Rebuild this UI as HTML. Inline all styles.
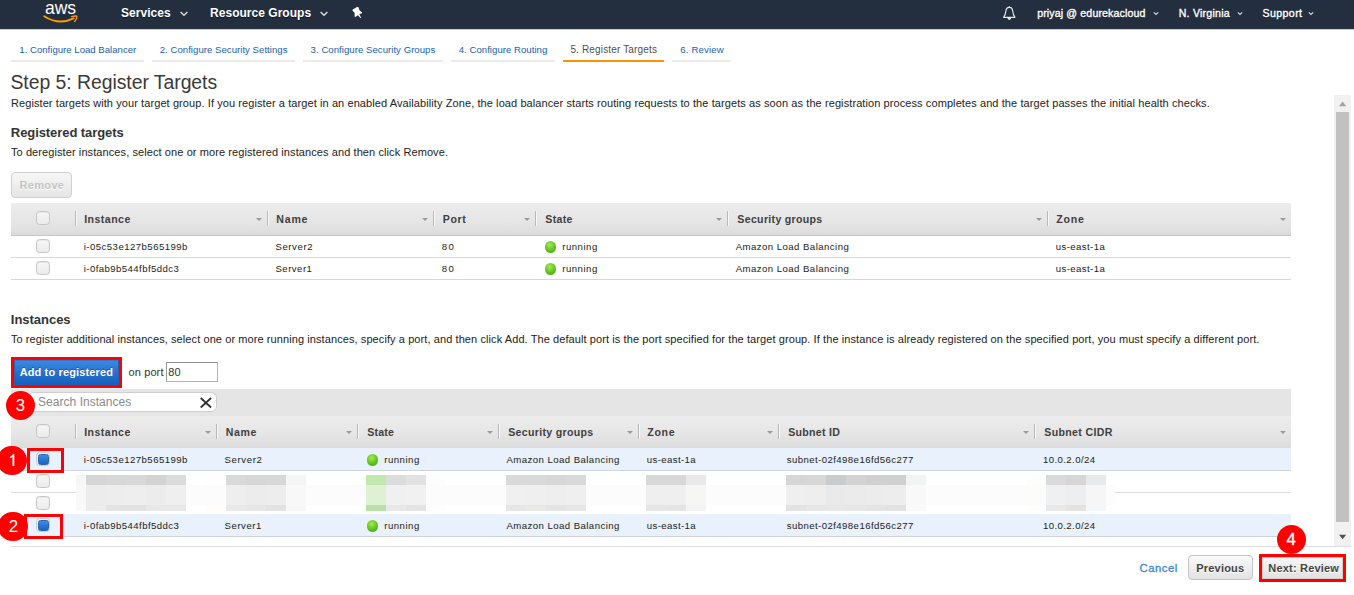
<!DOCTYPE html>
<html><head><meta charset="utf-8"><title>Register Targets</title>
<style>
*{box-sizing:border-box;margin:0;padding:0}
html,body{width:1354px;height:595px;overflow:hidden;background:#fff;font-family:"Liberation Sans",sans-serif}
.a{position:absolute}
.x{position:absolute;white-space:pre;font-family:"Liberation Sans",sans-serif}
.cb{border:1px solid #c6c6c6;border-radius:3.5px;background:linear-gradient(#f6f6f6,#ebebeb);box-shadow:inset 0 1px 1px rgba(0,0,0,.06)}
.cbo{border:1px solid #c9ccd2;border-radius:3.5px;background:#eef2f8}
.cbi{border-radius:2.5px;background:linear-gradient(#3d8ae4,#1f63bb);border:1px solid #2367bd}
.dot{border-radius:50%;background:radial-gradient(circle at 42% 32%,#a6ea52 0%,#6cc928 45%,#4fae1a 80%,#3f9a12 100%)}
.arr{width:0;height:0;border-left:3.1px solid transparent;border-right:3.1px solid transparent;border-top:3.2px solid #9a9a9a}
</style></head><body>
<div class="a" style="left:0;top:0;width:1354px;height:28px;background:#232f3e"></div>
<div class="a" style="left:0;top:28px;width:1354px;height:1px;background:#2b3644"></div>
<div class="a" style="left:0;top:29px;width:1354px;height:1px;background:#c5c8cc"></div>
<svg class="a" style="left:40px;top:0" width="44" height="28" viewBox="40 0 44 28">
<text x="44.9" y="13.7" font-family="Liberation Sans" font-size="18.2" fill="#fff" textLength="31.2" lengthAdjust="spacingAndGlyphs">aws</text>
<path d="M44.2 16.2 Q59 25.6 73.6 18.4" stroke="#f90" stroke-width="1.9" fill="none" stroke-linecap="round"/>
<path d="M71.6 16.6 Q75 15.6 76.9 16.2 Q77 18.6 74.6 21.6" stroke="#f90" stroke-width="1.4" fill="none" stroke-linecap="round" stroke-linejoin="round"/>
</svg>
<svg class="a" style="left:178.6px;top:9px" width="10" height="10" viewBox="0 0 10 10"><path d="M1.6 2.9 L5 6.3 L8.4 2.9" stroke="#ddd" stroke-width="1.4" fill="none"/></svg>
<svg class="a" style="left:318.9px;top:9px" width="10" height="10" viewBox="0 0 10 10"><path d="M1.6 2.9 L5 6.3 L8.4 2.9" stroke="#ddd" stroke-width="1.4" fill="none"/></svg>
<svg class="a" style="left:350px;top:5px" width="16" height="16" viewBox="350 5 16 16"><path d="M357 7 L358.3 7.1 L359.6 10.6 L362.3 12.5 L361.6 13.6 L359.3 14 L361.2 17.9 L360.4 18 L358 15.2 L355.3 17 L354.6 16.6 L354.7 13 L352.4 10.6 L352.8 9.6 Z" fill="#fff"/></svg>
<svg class="a" style="left:1000px;top:4px" width="20" height="18" viewBox="1000 4 20 18"><path d="M1009.3 7.3 C1006.6 7.3 1006 9.4 1005.85 11.2 C1005.65 13.6 1005.3 15.1 1003.6 17.3 L1015 17.3 C1013.3 15.1 1012.95 13.6 1012.75 11.2 C1012.6 9.4 1012 7.3 1009.3 7.3 Z" stroke="#e8e8e8" stroke-width="1.15" fill="none" stroke-linejoin="round"/><path d="M1007.4 17.8 L1011.2 17.8 C1010.9 19.4 1009.9 19.9 1009.3 19.9 C1008.7 19.9 1007.7 19.4 1007.4 17.8 Z" fill="#e8e8e8"/><circle cx="1009.25" cy="7" r=".7" fill="#e8e8e8"/></svg>
<svg class="a" style="left:1151.5px;top:10px" width="8" height="8" viewBox="0 0 8 8"><path d="M1.8 2.3 L4 4.5 L6.2 2.3" stroke="#d8d8d8" stroke-width="1.15" fill="none"/></svg>
<svg class="a" style="left:1235.5px;top:10px" width="8" height="8" viewBox="0 0 8 8"><path d="M1.8 2.3 L4 4.5 L6.2 2.3" stroke="#d8d8d8" stroke-width="1.15" fill="none"/></svg>
<svg class="a" style="left:1307px;top:10px" width="8" height="8" viewBox="0 0 8 8"><path d="M1.8 2.3 L4 4.5 L6.2 2.3" stroke="#d8d8d8" stroke-width="1.15" fill="none"/></svg>
<div class="a " style="left:11px;top:60px;width:133px;height:2px;background:#eaeaea"></div>
<div class="a " style="left:152px;top:60px;width:143px;height:2px;background:#eaeaea"></div>
<div class="a " style="left:303px;top:60px;width:140px;height:2px;background:#eaeaea"></div>
<div class="a " style="left:451px;top:60px;width:104px;height:2px;background:#eaeaea"></div>
<div class="a " style="left:563px;top:60px;width:101px;height:2px;background:#ff9200"></div>
<div class="a " style="left:672px;top:60px;width:59px;height:2px;background:#eaeaea"></div>
<div class="a " style="left:1334px;top:95px;width:17px;height:451px;background:#f1f1f1"></div>
<div class="a " style="left:1336px;top:112px;width:13px;height:410px;background:#c1c1c1"></div>
<svg class="a" style="left:1338px;top:100px" width="10" height="8" viewBox="0 0 10 8"><path d="M1 6.2 L4.6 1.6 L8.2 6.2 Z" fill="#a3a3a3"/></svg>
<svg class="a" style="left:1338px;top:533px" width="10" height="8" viewBox="0 0 10 8"><path d="M1 1.8 L8.2 1.8 L4.6 6.2 Z" fill="#505050"/></svg>
<div class="a " style="left:11px;top:546px;width:1340px;height:1px;background:#dedede"></div>
<div class="a " style="left:11px;top:172px;width:61px;height:26px;border:1px solid #d0d0d0;border-radius:4px;background:linear-gradient(#f6f6f6,#e6e6e6)"></div>
<div class="a " style="left:11px;top:203px;width:1280px;height:33px;background:linear-gradient(#ececec 0%,#e6e6e6 55%,#dcdcdc 100%);border-bottom:1px solid #c6c6c6"></div>
<div class="a cb" style="left:36.2px;top:211px;width:13.6px;height:13.8px;"></div>
<div class="a " style="left:75px;top:211px;width:1px;height:15px;background:#b9b9b9"></div>
<div class="a " style="left:76px;top:211px;width:1px;height:15px;background:#f8f8f8"></div>
<div class="a " style="left:267px;top:211px;width:1px;height:15px;background:#b9b9b9"></div>
<div class="a " style="left:268px;top:211px;width:1px;height:15px;background:#f8f8f8"></div>
<div class="a " style="left:433px;top:211px;width:1px;height:15px;background:#b9b9b9"></div>
<div class="a " style="left:434px;top:211px;width:1px;height:15px;background:#f8f8f8"></div>
<div class="a " style="left:535px;top:211px;width:1px;height:15px;background:#b9b9b9"></div>
<div class="a " style="left:536px;top:211px;width:1px;height:15px;background:#f8f8f8"></div>
<div class="a " style="left:727px;top:211px;width:1px;height:15px;background:#b9b9b9"></div>
<div class="a " style="left:728px;top:211px;width:1px;height:15px;background:#f8f8f8"></div>
<div class="a " style="left:1047px;top:211px;width:1px;height:15px;background:#b9b9b9"></div>
<div class="a " style="left:1048px;top:211px;width:1px;height:15px;background:#f8f8f8"></div>
<div class="a arr" style="left:256.3px;top:217.6px"></div>
<div class="a arr" style="left:422.3px;top:217.6px"></div>
<div class="a arr" style="left:524.3px;top:217.6px"></div>
<div class="a arr" style="left:716.3px;top:217.6px"></div>
<div class="a arr" style="left:1036.3px;top:217.6px"></div>
<div class="a arr" style="left:1280.3px;top:217.6px"></div>
<div class="a " style="left:11px;top:257px;width:1280px;height:1px;background:#d7d7d7"></div>
<div class="a " style="left:11px;top:279px;width:1280px;height:1px;background:#d7d7d7"></div>
<div class="a cb" style="left:36.2px;top:239.3px;width:13.6px;height:13.6px;"></div>
<div class="a cb" style="left:36.2px;top:261.3px;width:13.6px;height:13.6px;"></div>
<div class="a dot" style="left:544.7px;top:241.39999999999998px;width:11.6px;height:11.6px;"></div>
<div class="a dot" style="left:544.7px;top:263.4px;width:11.6px;height:11.6px;"></div>
<div class="a " style="left:11px;top:357px;width:111px;height:31px;background:#ff0000"></div>
<div class="a " style="left:14px;top:360px;width:105px;height:25px;background:linear-gradient(#3a88df,#2470cc 55%,#1561bd);border:1px solid #1c62b8;border-top-color:#2d78d0;border-radius:1px"></div>
<div class="a " style="left:166px;top:362px;width:52px;height:20px;background:#fff;border:1px solid #b4b4b4;border-top-color:#8e8e8e;border-left-color:#9a9a9a"></div>
<div class="a " style="left:11px;top:389px;width:1280px;height:27px;background:#e5e5e5"></div>
<div class="a " style="left:28px;top:392px;width:189px;height:20px;background:#fff;border:1px solid #cfcfcf;border-radius:6px"></div>
<svg class="a" style="left:198px;top:396px" width="16" height="14" viewBox="198 396 16 14"><path d="M200.7 398 L211.1 407.5 M211.1 398 L200.7 407.5" stroke="#333" stroke-width="1.75" fill="none"/></svg>
<div class="a " style="left:11px;top:416px;width:1280px;height:33px;background:linear-gradient(#ececec 0%,#e6e6e6 55%,#dcdcdc 100%);border-bottom:1px solid #c6c6c6"></div>
<div class="a cb" style="left:36.2px;top:424px;width:13.6px;height:13.8px;"></div>
<div class="a " style="left:75px;top:424px;width:1px;height:15px;background:#b9b9b9"></div>
<div class="a " style="left:76px;top:424px;width:1px;height:15px;background:#f8f8f8"></div>
<div class="a " style="left:216px;top:424px;width:1px;height:15px;background:#b9b9b9"></div>
<div class="a " style="left:217px;top:424px;width:1px;height:15px;background:#f8f8f8"></div>
<div class="a " style="left:357px;top:424px;width:1px;height:15px;background:#b9b9b9"></div>
<div class="a " style="left:358px;top:424px;width:1px;height:15px;background:#f8f8f8"></div>
<div class="a " style="left:498px;top:424px;width:1px;height:15px;background:#b9b9b9"></div>
<div class="a " style="left:499px;top:424px;width:1px;height:15px;background:#f8f8f8"></div>
<div class="a " style="left:638px;top:424px;width:1px;height:15px;background:#b9b9b9"></div>
<div class="a " style="left:639px;top:424px;width:1px;height:15px;background:#f8f8f8"></div>
<div class="a " style="left:778px;top:424px;width:1px;height:15px;background:#b9b9b9"></div>
<div class="a " style="left:779px;top:424px;width:1px;height:15px;background:#f8f8f8"></div>
<div class="a " style="left:1034px;top:424px;width:1px;height:15px;background:#b9b9b9"></div>
<div class="a " style="left:1035px;top:424px;width:1px;height:15px;background:#f8f8f8"></div>
<div class="a arr" style="left:205.3px;top:430.6px"></div>
<div class="a arr" style="left:346.3px;top:430.6px"></div>
<div class="a arr" style="left:487.3px;top:430.6px"></div>
<div class="a arr" style="left:627.3px;top:430.6px"></div>
<div class="a arr" style="left:767.3px;top:430.6px"></div>
<div class="a arr" style="left:1023.3px;top:430.6px"></div>
<div class="a arr" style="left:1280.3px;top:430.6px"></div>
<div class="a " style="left:11px;top:448px;width:1280px;height:22px;background:#e8f1fc"></div>
<div class="a " style="left:11px;top:470px;width:1280px;height:1px;background:#cfd6df"></div>
<div class="a " style="left:11px;top:492px;width:1280px;height:1px;background:#dcdcdc"></div>
<div class="a " style="left:11px;top:514px;width:1280px;height:22px;background:#e8f1fc"></div>
<div class="a " style="left:11px;top:536px;width:1280px;height:1px;background:#cfd3d8"></div>
<div class="a cb" style="left:36.2px;top:474.2px;width:13.6px;height:13.6px;"></div>
<div class="a cb" style="left:36.2px;top:496.3px;width:13.6px;height:13.6px;"></div>
<div class="a dot" style="left:366.7px;top:454.4px;width:11.6px;height:11.6px;"></div>
<div class="a dot" style="left:366.7px;top:520.4000000000001px;width:11.6px;height:11.6px;"></div>
<div class="a " style="left:76px;top:475px;width:1039px;height:36px;background:#fff"></div>
<div class="a " style="left:76px;top:485px;width:1039px;height:20px;background:#fcfcfc"></div>
<div class="a " style="left:86px;top:475px;width:20px;height:10px;background:#d6d5d5"></div>
<div class="a " style="left:86px;top:485px;width:20px;height:20px;background:#ececec"></div>
<div class="a " style="left:86px;top:505px;width:20px;height:6px;background:#ececec"></div>
<div class="a " style="left:106px;top:475px;width:20px;height:10px;background:#d7d7d7"></div>
<div class="a " style="left:106px;top:485px;width:20px;height:20px;background:#ededed"></div>
<div class="a " style="left:106px;top:505px;width:20px;height:6px;background:#e3e3e3"></div>
<div class="a " style="left:126px;top:475px;width:20px;height:10px;background:#d8d8d8"></div>
<div class="a " style="left:126px;top:485px;width:20px;height:20px;background:#eeeeee"></div>
<div class="a " style="left:126px;top:505px;width:20px;height:6px;background:#e2e3e2"></div>
<div class="a " style="left:146px;top:475px;width:20px;height:10px;background:#d4d3d3"></div>
<div class="a " style="left:146px;top:485px;width:20px;height:20px;background:#ececec"></div>
<div class="a " style="left:146px;top:505px;width:20px;height:6px;background:#e8e8e8"></div>
<div class="a " style="left:166px;top:475px;width:20px;height:10px;background:#dbdbdb"></div>
<div class="a " style="left:166px;top:485px;width:20px;height:20px;background:#eeefee"></div>
<div class="a " style="left:166px;top:505px;width:20px;height:6px;background:#e8e8e8"></div>
<div class="a " style="left:76px;top:475px;width:10px;height:10px;background:#f5f6f6"></div>
<div class="a " style="left:76px;top:485px;width:10px;height:20px;background:#f8f8f8"></div>
<div class="a " style="left:76px;top:505px;width:10px;height:6px;background:#f9f9f9"></div>
<div class="a " style="left:206px;top:475px;width:20px;height:10px;background:#fefefe"></div>
<div class="a " style="left:206px;top:485px;width:20px;height:20px;background:#fcfcfc"></div>
<div class="a " style="left:206px;top:505px;width:20px;height:6px;background:#fefdfc"></div>
<div class="a " style="left:226px;top:475px;width:20px;height:10px;background:#d9d9d9"></div>
<div class="a " style="left:226px;top:485px;width:20px;height:20px;background:#eeeeee"></div>
<div class="a " style="left:226px;top:505px;width:20px;height:6px;background:#e9e9e9"></div>
<div class="a " style="left:246px;top:475px;width:20px;height:10px;background:#d6d6d6"></div>
<div class="a " style="left:246px;top:485px;width:20px;height:20px;background:#ececec"></div>
<div class="a " style="left:246px;top:505px;width:20px;height:6px;background:#e6e6e6"></div>
<div class="a " style="left:266px;top:475px;width:20px;height:10px;background:#d7d7d7"></div>
<div class="a " style="left:266px;top:485px;width:20px;height:20px;background:#ededed"></div>
<div class="a " style="left:266px;top:505px;width:20px;height:6px;background:#e2e2e2"></div>
<div class="a " style="left:286px;top:475px;width:20px;height:10px;background:#f5f5f5"></div>
<div class="a " style="left:286px;top:485px;width:20px;height:20px;background:#f8f8f8"></div>
<div class="a " style="left:286px;top:505px;width:20px;height:6px;background:#f7f7f7"></div>
<div class="a " style="left:366px;top:475px;width:20px;height:10px;background:#c3e8ac"></div>
<div class="a " style="left:366px;top:485px;width:20px;height:20px;background:#def1d2"></div>
<div class="a " style="left:366px;top:505px;width:20px;height:6px;background:#b9e0a8"></div>
<div class="a " style="left:386px;top:475px;width:20px;height:10px;background:#dcdcdc"></div>
<div class="a " style="left:386px;top:485px;width:20px;height:20px;background:#f0f0f0"></div>
<div class="a " style="left:386px;top:505px;width:20px;height:6px;background:#e8e8e8"></div>
<div class="a " style="left:406px;top:475px;width:20px;height:10px;background:#e2e2e2"></div>
<div class="a " style="left:406px;top:485px;width:20px;height:20px;background:#f1f1f1"></div>
<div class="a " style="left:406px;top:505px;width:20px;height:6px;background:#e4e4e4"></div>
<div class="a " style="left:426px;top:475px;width:20px;height:10px;background:#fdfdfd"></div>
<div class="a " style="left:426px;top:485px;width:20px;height:20px;background:#fcfcfc"></div>
<div class="a " style="left:426px;top:505px;width:20px;height:6px;background:#fdfdfd"></div>
<div class="a " style="left:506px;top:475px;width:20px;height:10px;background:#d9d9d9"></div>
<div class="a " style="left:506px;top:485px;width:20px;height:20px;background:#f0f0f0"></div>
<div class="a " style="left:506px;top:505px;width:20px;height:6px;background:#e6e6e6"></div>
<div class="a " style="left:526px;top:475px;width:20px;height:10px;background:#d9d9d9"></div>
<div class="a " style="left:526px;top:485px;width:20px;height:20px;background:#efefef"></div>
<div class="a " style="left:526px;top:505px;width:20px;height:6px;background:#e8e8e6"></div>
<div class="a " style="left:546px;top:475px;width:20px;height:10px;background:#d7d7d7"></div>
<div class="a " style="left:546px;top:485px;width:20px;height:20px;background:#eeeeee"></div>
<div class="a " style="left:546px;top:505px;width:20px;height:6px;background:#e3e4e3"></div>
<div class="a " style="left:566px;top:475px;width:20px;height:10px;background:#d9d9d9"></div>
<div class="a " style="left:566px;top:485px;width:20px;height:20px;background:#efefef"></div>
<div class="a " style="left:566px;top:505px;width:20px;height:6px;background:#e7e7e7"></div>
<div class="a " style="left:646px;top:475px;width:20px;height:10px;background:#d8d8d8"></div>
<div class="a " style="left:646px;top:485px;width:20px;height:20px;background:#efefef"></div>
<div class="a " style="left:646px;top:505px;width:20px;height:6px;background:#e6e6e6"></div>
<div class="a " style="left:666px;top:475px;width:20px;height:10px;background:#d8d8d8"></div>
<div class="a " style="left:666px;top:485px;width:20px;height:20px;background:#efefef"></div>
<div class="a " style="left:666px;top:505px;width:20px;height:6px;background:#e5e5e5"></div>
<div class="a " style="left:686px;top:475px;width:20px;height:10px;background:#e9e9e9"></div>
<div class="a " style="left:686px;top:485px;width:20px;height:20px;background:#f6f6f5"></div>
<div class="a " style="left:686px;top:505px;width:20px;height:6px;background:#f3f3f3"></div>
<div class="a " style="left:786px;top:475px;width:20px;height:10px;background:#d6d6d6"></div>
<div class="a " style="left:786px;top:485px;width:20px;height:20px;background:#efefef"></div>
<div class="a " style="left:786px;top:505px;width:20px;height:6px;background:#e3e3e3"></div>
<div class="a " style="left:806px;top:475px;width:20px;height:10px;background:#d8d7d5"></div>
<div class="a " style="left:806px;top:485px;width:20px;height:20px;background:#eeeeee"></div>
<div class="a " style="left:806px;top:505px;width:20px;height:6px;background:#e7e7e7"></div>
<div class="a " style="left:826px;top:475px;width:20px;height:10px;background:#c9cbcd"></div>
<div class="a " style="left:826px;top:485px;width:20px;height:20px;background:#eaeaea"></div>
<div class="a " style="left:826px;top:505px;width:20px;height:6px;background:#e8e8e8"></div>
<div class="a " style="left:846px;top:475px;width:20px;height:10px;background:#d3d3d3"></div>
<div class="a " style="left:846px;top:485px;width:20px;height:20px;background:#ebebeb"></div>
<div class="a " style="left:846px;top:505px;width:20px;height:6px;background:#e7e7e7"></div>
<div class="a " style="left:866px;top:475px;width:20px;height:10px;background:#cfd0cf"></div>
<div class="a " style="left:866px;top:485px;width:20px;height:20px;background:#ececec"></div>
<div class="a " style="left:866px;top:505px;width:20px;height:6px;background:#e3e4e3"></div>
<div class="a " style="left:886px;top:475px;width:20px;height:10px;background:#d0d0d0"></div>
<div class="a " style="left:886px;top:485px;width:20px;height:20px;background:#ededed"></div>
<div class="a " style="left:886px;top:505px;width:20px;height:6px;background:#e2e2e2"></div>
<div class="a " style="left:906px;top:475px;width:20px;height:10px;background:#f2f4f3"></div>
<div class="a " style="left:906px;top:485px;width:20px;height:20px;background:#f9f9f9"></div>
<div class="a " style="left:906px;top:505px;width:20px;height:6px;background:#fafafa"></div>
<div class="a " style="left:1026px;top:475px;width:20px;height:10px;background:#fdfdfc"></div>
<div class="a " style="left:1026px;top:485px;width:20px;height:20px;background:#fcfcfb"></div>
<div class="a " style="left:1026px;top:505px;width:20px;height:6px;background:#fefefd"></div>
<div class="a " style="left:1046px;top:475px;width:20px;height:10px;background:#dadadc"></div>
<div class="a " style="left:1046px;top:485px;width:20px;height:20px;background:#eff0f1"></div>
<div class="a " style="left:1046px;top:505px;width:20px;height:6px;background:#e8e8e8"></div>
<div class="a " style="left:1066px;top:475px;width:20px;height:10px;background:#d8d6d4"></div>
<div class="a " style="left:1066px;top:485px;width:20px;height:20px;background:#efeeee"></div>
<div class="a " style="left:1066px;top:505px;width:20px;height:6px;background:#e4e3e2"></div>
<div class="a " style="left:1086px;top:475px;width:20px;height:10px;background:#e8e9ea"></div>
<div class="a " style="left:1086px;top:485px;width:20px;height:20px;background:#f6f6f7"></div>
<div class="a " style="left:1086px;top:505px;width:20px;height:6px;background:#f5f6f8"></div>
<div class="a " style="left:27px;top:448px;width:37px;height:25px;border:3px solid #ff0000"></div>
<div class="a " style="left:24px;top:514px;width:39px;height:25px;border:3px solid #ff0000"></div>
<div class="a cbo" style="left:36px;top:452px;width:14px;height:14px;"></div>
<div class="a cbi" style="left:38px;top:454px;width:11px;height:11px;"></div>
<div class="a cbo" style="left:36px;top:518px;width:14px;height:14px;"></div>
<div class="a cbi" style="left:38px;top:520px;width:11px;height:11px;"></div>
<div class="a " style="left:-2.6000000000000014px;top:445.59999999999997px;width:29.6px;height:29.6px;background:#ff0000;border-radius:50%"></div>
<div class="a " style="left:-1.8000000000000007px;top:511.90000000000003px;width:29.6px;height:29.6px;background:#ff0000;border-radius:50%"></div>
<div class="a " style="left:5.899999999999999px;top:390.8px;width:29.6px;height:29.6px;background:#ff0000;border-radius:50%"></div>
<div class="a " style="left:1276.7px;top:524.5px;width:29.6px;height:29.6px;background:#ff0000;border-radius:50%"></div>
<svg class="a" style="left:6px;top:450px" width="14" height="20" viewBox="6 450 14 20"><path d="M14.3 454 L14.3 466 L12.45 466 L12.45 456.7 C11.8 457.4 10.9 457.95 9.95 458.3 L9.95 456.75 C11.3 456.15 12.55 455.05 13.1 454 Z" fill="#fff"/></svg>
<div class="a " style="left:1188px;top:555px;width:65px;height:25px;border:1px solid #c4c4c4;border-radius:4px;background:linear-gradient(#fafafa,#e2e2e2)"></div>
<div class="a " style="left:1259px;top:554px;width:87px;height:28px;background:#ff0000"></div>
<div class="a " style="left:1262px;top:557px;width:81px;height:22px;border:1px solid #cfcfcf;background:linear-gradient(#f6f6f6,#e2e2e2)"></div>
<div class="x" style="left:121.08px;top:6.00px;font-size:12px;line-height:15px;font-weight:bold;color:#fff;letter-spacing:0.036px;text-shadow:0 1px 0 rgba(0,0,0,.55);">Services</div>
<div class="x" style="left:210.08px;top:6.00px;font-size:12px;line-height:15px;font-weight:bold;color:#fff;letter-spacing:0.024px;text-shadow:0 1px 0 rgba(0,0,0,.55);">Resource Groups</div>
<div class="x" style="left:1037.16px;top:7.00px;font-size:10.6px;line-height:13px;font-weight:normal;color:#fff;letter-spacing:0.135px;text-shadow:0 1px 0 rgba(0,0,0,.55);-webkit-text-stroke:.35px #fff;">priyaj @ edurekacloud</div>
<div class="x" style="left:1178.76px;top:7.00px;font-size:10.6px;line-height:13px;font-weight:normal;color:#fff;letter-spacing:0.218px;text-shadow:0 1px 0 rgba(0,0,0,.55);-webkit-text-stroke:.35px #fff;">N. Virginia</div>
<div class="x" style="left:1262.56px;top:7.00px;font-size:10.6px;line-height:13px;font-weight:normal;color:#fff;letter-spacing:0.394px;text-shadow:0 1px 0 rgba(0,0,0,.55);-webkit-text-stroke:.35px #fff;">Support</div>
<div class="x" style="left:19.32px;top:44.00px;font-size:9.6px;line-height:12px;font-weight:normal;color:#1a60b2;letter-spacing:0.006px;">1. Configure Load Balancer</div>
<div class="x" style="left:159.72px;top:44.00px;font-size:9.6px;line-height:12px;font-weight:normal;color:#1a60b2;letter-spacing:0.029px;">2. Configure Security Settings</div>
<div class="x" style="left:310.62px;top:44.00px;font-size:9.6px;line-height:12px;font-weight:normal;color:#1a60b2;letter-spacing:0.035px;">3. Configure Security Groups</div>
<div class="x" style="left:458.72px;top:44.00px;font-size:9.6px;line-height:12px;font-weight:normal;color:#1a60b2;letter-spacing:0.029px;">4. Configure Routing</div>
<div class="x" style="left:570.40px;top:44.00px;font-size:10px;line-height:12px;font-weight:normal;color:#505050;letter-spacing:0.153px;">5. Register Targets</div>
<div class="x" style="left:680.32px;top:44.00px;font-size:9.6px;line-height:12px;font-weight:normal;color:#1a60b2;letter-spacing:0.141px;">6. Review</div>
<div class="x" style="left:10.44px;top:70.00px;font-size:19.4px;line-height:24px;font-weight:normal;color:#3a3a3a;letter-spacing:-0.041px;">Step 5: Register Targets</div>
<div class="x" style="left:10.94px;top:96.00px;font-size:11px;line-height:14px;font-weight:normal;color:#222;letter-spacing:0.088px;">Register targets with your target group. If you register a target in an enabled Availability Zone, the load balancer starts routing requests to the targets as soon as the registration process completes and the target passes the initial health checks.</div>
<div class="x" style="left:10.82px;top:125.00px;font-size:13px;line-height:16px;font-weight:bold;color:#333;letter-spacing:-0.070px;">Registered targets</div>
<div class="x" style="left:10.94px;top:145.00px;font-size:11px;line-height:14px;font-weight:normal;color:#222;letter-spacing:0.091px;">To deregister instances, select one or more registered instances and then click Remove.</div>
<div class="x" style="left:19.54px;top:178.00px;font-size:11px;line-height:14px;font-weight:bold;color:#c4c4c4;letter-spacing:0.325px;text-shadow:0 1px 0 #fff;">Remove</div>
<div class="x" style="left:84.16px;top:213.00px;font-size:10.6px;line-height:13px;font-weight:bold;color:#404040;letter-spacing:0.455px;">Instance</div>
<div class="x" style="left:276.36px;top:213.00px;font-size:10.6px;line-height:13px;font-weight:bold;color:#404040;letter-spacing:0.738px;">Name</div>
<div class="x" style="left:442.76px;top:213.00px;font-size:10.6px;line-height:13px;font-weight:bold;color:#404040;letter-spacing:0.595px;">Port</div>
<div class="x" style="left:545.36px;top:213.00px;font-size:10.6px;line-height:13px;font-weight:bold;color:#404040;letter-spacing:0.291px;">State</div>
<div class="x" style="left:737.36px;top:213.00px;font-size:10.6px;line-height:13px;font-weight:bold;color:#404040;letter-spacing:0.301px;">Security groups</div>
<div class="x" style="left:1056.26px;top:213.00px;font-size:10.6px;line-height:13px;font-weight:bold;color:#404040;letter-spacing:0.753px;">Zone</div>
<div class="x" style="left:83.72px;top:241.00px;font-size:9.6px;line-height:12px;font-weight:normal;color:#222;letter-spacing:0.458px;">i-05c53e127b565199b</div>
<div class="x" style="left:275.42px;top:241.00px;font-size:9.6px;line-height:12px;font-weight:normal;color:#222;letter-spacing:0.593px;">Server2</div>
<div class="x" style="left:441.82px;top:241.00px;font-size:9.6px;line-height:12px;font-weight:normal;color:#222;letter-spacing:1.280px;">80</div>
<div class="x" style="left:562.22px;top:241.00px;font-size:9.6px;line-height:12px;font-weight:normal;color:#222;letter-spacing:0.506px;">running</div>
<div class="x" style="left:735.72px;top:241.00px;font-size:9.6px;line-height:12px;font-weight:normal;color:#222;letter-spacing:0.452px;">Amazon Load Balancing</div>
<div class="x" style="left:1055.72px;top:241.00px;font-size:9.6px;line-height:12px;font-weight:normal;color:#222;letter-spacing:0.414px;">us-east-1a</div>
<div class="x" style="left:83.72px;top:263.00px;font-size:9.6px;line-height:12px;font-weight:normal;color:#222;letter-spacing:0.426px;">i-0fab9b544fbf5ddc3</div>
<div class="x" style="left:275.42px;top:263.00px;font-size:9.6px;line-height:12px;font-weight:normal;color:#222;letter-spacing:0.493px;">Server1</div>
<div class="x" style="left:441.82px;top:263.00px;font-size:9.6px;line-height:12px;font-weight:normal;color:#222;letter-spacing:1.280px;">80</div>
<div class="x" style="left:562.22px;top:263.00px;font-size:9.6px;line-height:12px;font-weight:normal;color:#222;letter-spacing:0.506px;">running</div>
<div class="x" style="left:735.72px;top:263.00px;font-size:9.6px;line-height:12px;font-weight:normal;color:#222;letter-spacing:0.452px;">Amazon Load Balancing</div>
<div class="x" style="left:1055.72px;top:263.00px;font-size:9.6px;line-height:12px;font-weight:normal;color:#222;letter-spacing:0.414px;">us-east-1a</div>
<div class="x" style="left:10.82px;top:312.00px;font-size:13px;line-height:16px;font-weight:bold;color:#333;letter-spacing:-0.028px;">Instances</div>
<div class="x" style="left:10.94px;top:332.00px;font-size:11px;line-height:14px;font-weight:normal;color:#222;letter-spacing:0.087px;">To register additional instances, select one or more running instances, specify a port, and then click Add. The default port is the port specified for the target group. If the instance is already registered on the specified port, you must specify a different port.</div>
<div class="x" style="left:19.64px;top:365.00px;font-size:11px;line-height:14px;font-weight:bold;color:#fff;letter-spacing:0.140px;text-shadow:0 -1px 0 rgba(0,0,0,.3);">Add to registered</div>
<div class="x" style="left:128.54px;top:365.00px;font-size:11px;line-height:14px;font-weight:normal;color:#333;letter-spacing:0.112px;">on port</div>
<div class="x" style="left:168.14px;top:365.00px;font-size:11px;line-height:14px;font-weight:normal;color:#333;letter-spacing:0.270px;">80</div>
<div class="x" style="left:38.08px;top:395.00px;font-size:12px;line-height:15px;font-weight:normal;color:#8a8a8a;letter-spacing:0.028px;">Search Instances</div>
<div class="x" style="left:84.16px;top:426.00px;font-size:10.6px;line-height:13px;font-weight:bold;color:#404040;letter-spacing:0.455px;">Instance</div>
<div class="x" style="left:225.76px;top:426.00px;font-size:10.6px;line-height:13px;font-weight:bold;color:#404040;letter-spacing:0.604px;">Name</div>
<div class="x" style="left:367.36px;top:426.00px;font-size:10.6px;line-height:13px;font-weight:bold;color:#404040;letter-spacing:0.166px;">State</div>
<div class="x" style="left:508.26px;top:426.00px;font-size:10.6px;line-height:13px;font-weight:bold;color:#404040;letter-spacing:0.301px;">Security groups</div>
<div class="x" style="left:647.36px;top:426.00px;font-size:10.6px;line-height:13px;font-weight:bold;color:#404040;letter-spacing:0.620px;">Zone</div>
<div class="x" style="left:788.26px;top:426.00px;font-size:10.6px;line-height:13px;font-weight:bold;color:#404040;letter-spacing:0.279px;">Subnet ID</div>
<div class="x" style="left:1044.26px;top:426.00px;font-size:10.6px;line-height:13px;font-weight:bold;color:#404040;letter-spacing:0.342px;">Subnet CIDR</div>
<div class="x" style="left:83.72px;top:454.00px;font-size:9.6px;line-height:12px;font-weight:normal;color:#222;letter-spacing:0.458px;">i-05c53e127b565199b</div>
<div class="x" style="left:224.62px;top:454.00px;font-size:9.6px;line-height:12px;font-weight:normal;color:#222;letter-spacing:0.610px;">Server2</div>
<div class="x" style="left:384.22px;top:454.00px;font-size:9.6px;line-height:12px;font-weight:normal;color:#222;letter-spacing:0.506px;">running</div>
<div class="x" style="left:506.42px;top:454.00px;font-size:9.6px;line-height:12px;font-weight:normal;color:#222;letter-spacing:0.447px;">Amazon Load Balancing</div>
<div class="x" style="left:646.72px;top:454.00px;font-size:9.6px;line-height:12px;font-weight:normal;color:#222;letter-spacing:0.403px;">us-east-1a</div>
<div class="x" style="left:786.72px;top:454.00px;font-size:9.6px;line-height:12px;font-weight:normal;color:#222;letter-spacing:0.427px;">subnet-02f498e16fd56c277</div>
<div class="x" style="left:1043.02px;top:454.00px;font-size:9.6px;line-height:12px;font-weight:normal;color:#222;letter-spacing:0.404px;">10.0.2.0/24</div>
<div class="x" style="left:83.72px;top:520.00px;font-size:9.6px;line-height:12px;font-weight:normal;color:#222;letter-spacing:0.426px;">i-0fab9b544fbf5ddc3</div>
<div class="x" style="left:224.62px;top:520.00px;font-size:9.6px;line-height:12px;font-weight:normal;color:#222;letter-spacing:0.526px;">Server1</div>
<div class="x" style="left:384.22px;top:520.00px;font-size:9.6px;line-height:12px;font-weight:normal;color:#222;letter-spacing:0.506px;">running</div>
<div class="x" style="left:506.42px;top:520.00px;font-size:9.6px;line-height:12px;font-weight:normal;color:#222;letter-spacing:0.447px;">Amazon Load Balancing</div>
<div class="x" style="left:646.72px;top:520.00px;font-size:9.6px;line-height:12px;font-weight:normal;color:#222;letter-spacing:0.403px;">us-east-1a</div>
<div class="x" style="left:786.72px;top:520.00px;font-size:9.6px;line-height:12px;font-weight:normal;color:#222;letter-spacing:0.427px;">subnet-02f498e16fd56c277</div>
<div class="x" style="left:1043.02px;top:520.00px;font-size:9.6px;line-height:12px;font-weight:normal;color:#222;letter-spacing:0.404px;">10.0.2.0/24</div>
<div class="x" style="left:1139.52px;top:561.00px;font-size:11.3px;line-height:14px;font-weight:normal;color:#3d82dc;letter-spacing:0.517px;-webkit-text-stroke:.3px #3d82dc;">Cancel</div>
<div class="x" style="left:1196.34px;top:561.00px;font-size:11px;line-height:14px;font-weight:bold;color:#444;letter-spacing:0.179px;text-shadow:0 1px 0 #fff;">Previous</div>
<div class="x" style="left:1268.34px;top:561.00px;font-size:11px;line-height:14px;font-weight:bold;color:#444;letter-spacing:0.185px;text-shadow:0 1px 0 #fff;">Next: Review</div>
<div class="x" style="left:8.73px;top:516.00px;font-size:16.8px;line-height:21px;font-weight:normal;color:#fff;letter-spacing:0.000px;">2</div>
<div class="x" style="left:15.73px;top:395.00px;font-size:16.8px;line-height:21px;font-weight:normal;color:#fff;letter-spacing:0.000px;">3</div>
<div class="x" style="left:1286.53px;top:529.00px;font-size:16.8px;line-height:21px;font-weight:normal;color:#fff;letter-spacing:0.000px;-webkit-text-stroke:.35px #fff;">4</div>
</body></html>
